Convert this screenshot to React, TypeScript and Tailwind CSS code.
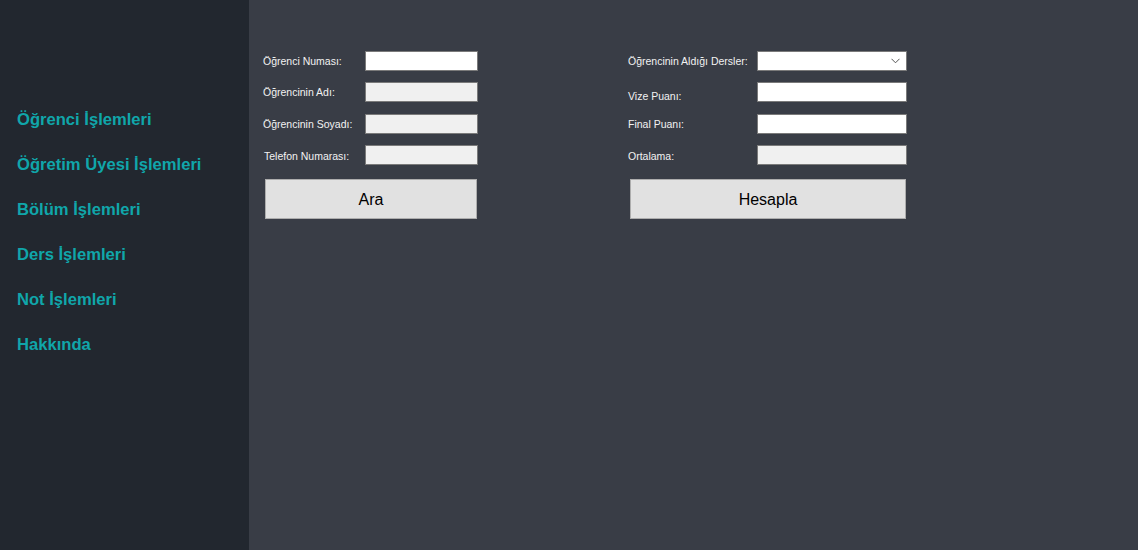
import React from 'react';

const menuItems = [
  'Öğrenci İşlemleri',
  'Öğretim Üyesi İşlemleri',
  'Bölüm İşlemleri',
  'Ders İşlemleri',
  'Not İşlemleri',
  'Hakkında',
];

type FieldProps = {
  label: string;
  disabled?: boolean;
  labelClass?: string;
  inputWidth: string;
  labelWidth: string;
  select?: boolean;
};

const Field: React.FC<FieldProps> = ({ label, disabled, labelClass = '', inputWidth, labelWidth, select }) => (
  <div className="flex h-[20px] items-center">
    <span className={`${labelWidth} shrink-0 text-[10.5px] leading-none text-[#f2f2f2] ${labelClass}`}>{label}</span>
    <div
      className={`relative h-[20px] ${inputWidth} border border-[#7a7a7a] ${
        disabled ? 'bg-[#f0f0f0]' : 'bg-white'
      }`}
    >
      {select && (
        <svg
          className="absolute right-[6px] top-[6px]"
          width="9"
          height="6"
          viewBox="0 0 9 6"
          fill="none"
          stroke="#555555"
          strokeWidth="1"
        >
          <path d="M0.5 0.8 L4.5 4.8 L8.5 0.8" />
        </svg>
      )}
    </div>
  </div>
);

export default function App() {
  return (
    <div className="flex h-[550px] w-[1138px] overflow-hidden" style={{ fontFamily: '"Liberation Sans", Arial, sans-serif' }}>
      {/* Sidebar */}
      <aside className="flex w-[249px] shrink-0 flex-col bg-[#22272f] pl-[17px] pt-[109px]">
        {menuItems.map((item) => (
          <div key={item} className="flex h-[45px] items-start text-[16.6px] font-bold leading-[22px] text-[#10a6aa]">
            {item}
          </div>
        ))}
      </aside>

      {/* Main */}
      <main className="flex flex-1 bg-[#393d46] pl-[14px] pt-[51px]">
        {/* Left column */}
        <div className="flex w-[215px] flex-col">
          <Field label="Öğrenci Numası:" labelWidth="w-[102px]" inputWidth="w-[113px]" />
          <div className="mt-[11px]">
            <Field label="Öğrencinin Adı:" labelWidth="w-[102px]" inputWidth="w-[113px]" disabled />
          </div>
          <div className="mt-[12px]">
            <Field label="Öğrencinin Soyadı:" labelWidth="w-[102px]" inputWidth="w-[113px]" disabled />
          </div>
          <div className="mt-[11px]">
            <Field label="Telefon Numarası:" labelWidth="w-[102px]" inputWidth="w-[113px]" disabled labelClass="pl-px pt-[2px]" />
          </div>
          <button className="ml-[2px] mt-[14px] h-[40px] w-[212px] border border-[#adadad] bg-[#e1e1e1] pt-px text-[16px] text-black">
            Ara
          </button>
        </div>

        {/* Right column */}
        <div className="ml-[150px] flex w-[279px] flex-col">
          <Field label="Öğrencinin Aldığı Dersler:" labelWidth="w-[129px]" inputWidth="w-[150px]" select />
          <div className="mt-[11px]">
            <Field label="Vize Puanı:" labelWidth="w-[129px]" inputWidth="w-[150px]" labelClass="pt-[9px]" />
          </div>
          <div className="mt-[12px]">
            <Field label="Final Puanı:" labelWidth="w-[129px]" inputWidth="w-[150px]" />
          </div>
          <div className="mt-[11px]">
            <Field label="Ortalama:" labelWidth="w-[129px]" inputWidth="w-[150px]" disabled labelClass="pt-[3px]" />
          </div>
          <button className="ml-[2px] mt-[14px] h-[40px] w-[276px] border border-[#adadad] bg-[#e1e1e1] pt-px text-[16px] text-black">
            Hesapla
          </button>
        </div>
      </main>
    </div>
  );
}
